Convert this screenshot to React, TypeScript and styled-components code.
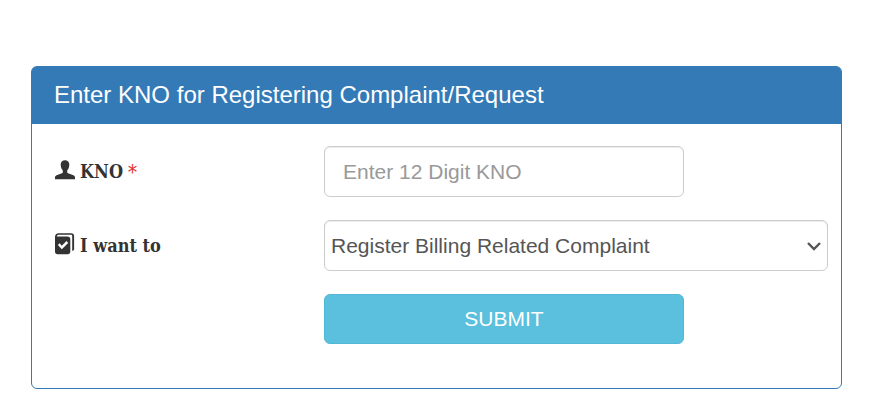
import React from "react";
import styled, { createGlobalStyle } from "styled-components";

const GlobalStyle = createGlobalStyle`
  *, *::before, *::after {
    box-sizing: border-box;
  }
  body {
    margin: 0;
    background: #fff;
    color: #333;
    font-family: "Liberation Sans", Arial, sans-serif;
  }
`;

const Page = styled.main`
  padding: 66px 28px 31px 31px;
`;

const Panel = styled.section`
  border: 1px solid #337ab7;
  border-radius: 6px;
  background: #fff;
`;

const PanelHeading = styled.header`
  padding: 13px 22px 15px;
  border-radius: 4px 4px 0 0;
  background: #337ab7;
`;

const Title = styled.h1`
  margin: 0;
  color: #fff;
  font-size: 24px;
  font-weight: 400;
  line-height: 29px;
`;

const Form = styled.form`
  display: flex;
  flex-direction: column;
  gap: 23px;
  padding: 22px 13px 44px 22px;
`;

const Row = styled.div`
  display: grid;
  grid-template-columns: 1fr 2fr;
  column-gap: 18px;
  align-items: center;
`;

const Label = styled.label`
  display: flex;
  align-items: center;
  gap: 5px;
  font-family: "DejaVu Serif Condensed", "DejaVu Serif", serif;
  font-size: 18px;
  font-weight: 700;
  line-height: 24px;
`;

const Icon = styled.svg`
  width: 21px;
  height: 24px;
  margin-bottom: 4px;
  flex: none;
  fill: currentColor;
`;

const Required = styled.span`
  color: #e0322d;
  font-size: 20px;
  font-weight: 400;
`;

const TextInput = styled.input`
  width: 360px;
  max-width: 100%;
  height: 51px;
  padding: 0 18px;
  border: 1px solid #ccc;
  border-radius: 6px;
  background: #fff;
  box-shadow: inset 0 1px 1px rgba(0, 0, 0, 0.075);
  color: #555;
  font: inherit;
  font-size: 21px;

  &::placeholder {
    color: #999;
    opacity: 1;
  }
`;

const SelectBox = styled.div`
  display: grid;
  align-items: center;

  > * {
    grid-area: 1 / 1;
  }
`;

const Select = styled.select`
  appearance: none;
  width: 100%;
  height: 51px;
  padding: 0 32px 0 6px;
  border: 1px solid #ccc;
  border-radius: 6px;
  background: #fff;
  box-shadow: inset 0 1px 1px rgba(0, 0, 0, 0.075);
  color: #555;
  font: inherit;
  font-size: 21px;
`;

const Chevron = styled.svg`
  justify-self: end;
  width: 14px;
  height: 10px;
  margin-right: 7px;
  pointer-events: none;
  fill: none;
  stroke: #555;
  stroke-width: 2.4;
`;

const SubmitButton = styled.button`
  grid-column: 2;
  width: 360px;
  max-width: 100%;
  height: 50px;
  border: 1px solid #52b8d4;
  border-radius: 6px;
  background: #5bc0de;
  color: #fff;
  font: inherit;
  font-size: 21px;
  cursor: pointer;
`;

const UserIcon = () => (
  <Icon viewBox="0 0 21 24" aria-hidden="true">
    <path d="M11 2.200C13.600 2.200 15.300 3.800 15.300 6.500C15.300 9 14.500 11.100 13.200 12.500V14C13.200 14.700 13.400 15 14 15.300L19.400 17.300C20.500 17.800 21 18.500 21 19.600V21.300H1V19.600C1 18.500 1.500 17.800 2.600 17.300L8 15.300C8.600 15 8.800 14.700 8.800 14V12.500C7.500 11.100 6.700 9 6.700 6.500C6.700 3.800 8.400 2.200 11 2.200Z" />
  </Icon>
);

const BookCheckIcon = () => (
  <Icon viewBox="0 0 21 24" aria-hidden="true">
    <path
      fillRule="evenodd"
      d="M4.800 1.200h12.400c1.800 0 2.900 1 2.900 2.700v14.200l-1.900 1V4c0-.8-.4-1.200-1.200-1.200H5c-1.200 0-2 .5-2.300 1.600h10.600c1.900 0 3 1 3 2.800v12.400c0 1.700-1 2.700-2.700 2.700H3.700c-1.700 0-2.700-1-2.700-2.700V5.100c0-2.500 1.400-3.900 3.800-3.900zM3.900 13l3.900 4.200 6.400-6.200-1.700-1.900-4.700 4.700-2.200-2.500z"
    />
  </Icon>
);

export default function App() {
  return (
    <>
      <GlobalStyle />
      <Page>
        <Panel>
          <PanelHeading>
            <Title>Enter KNO for Registering Complaint/Request</Title>
          </PanelHeading>
          <Form onSubmit={(event) => event.preventDefault()}>
            <Row>
              <Label htmlFor="kno">
                <UserIcon />
                KNO <Required>*</Required>
              </Label>
              <TextInput id="kno" type="text" maxLength={12} placeholder="Enter 12 Digit KNO" required />
            </Row>
            <Row>
              <Label htmlFor="request-type">
                <BookCheckIcon />
                I want to
              </Label>
              <SelectBox>
                <Select id="request-type">
                  <option>Register Billing Related Complaint</option>
                </Select>
                <Chevron viewBox="0 0 14 10" aria-hidden="true">
                  <path d="M1 2l6 6 6-6" />
                </Chevron>
              </SelectBox>
            </Row>
            <Row>
              <SubmitButton type="submit">SUBMIT</SubmitButton>
            </Row>
          </Form>
        </Panel>
      </Page>
    </>
  );
}
